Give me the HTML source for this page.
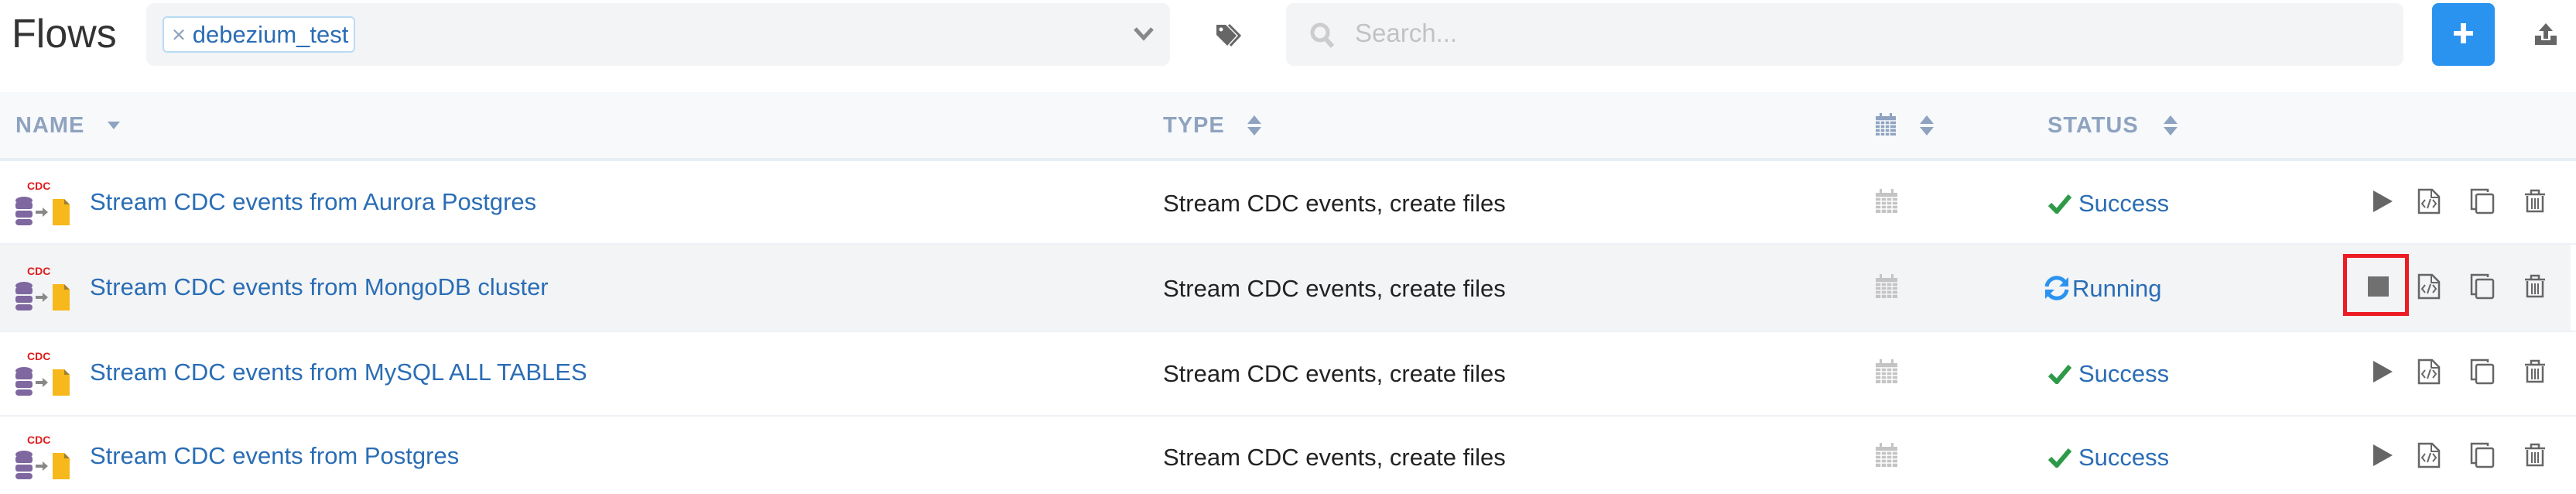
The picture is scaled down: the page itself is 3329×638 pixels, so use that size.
<!DOCTYPE html>
<html><head><meta charset="utf-8"><style>
*{margin:0;padding:0;box-sizing:border-box}
body{width:3329px;height:638px;background:#fff;font-family:"Liberation Sans",sans-serif;position:relative;overflow:hidden}
.a{position:absolute}
.hdr{color:#8fa3c0;font-weight:bold;font-size:29px;letter-spacing:1px}
.name{color:#2a6db5;font-size:31px;left:116px}
.type{color:#222;font-size:31px;left:1503px}
.st{color:#2a6db5;font-size:31px;left:2686px}
</style></head><body>
<div class="a" style="left:15px;top:14px;font-size:52px;color:#333">Flows</div>
<div class="a" style="left:189px;top:4px;width:1323px;height:81px;background:#f3f4f6;border-radius:10px"></div>
<div class="a" style="left:210px;top:21px;width:249px;height:47px;border:2px solid #b9dcf5;border-radius:6px;background:#fff;color:#2a6db5;font-size:31px;line-height:43px;padding-left:10px"><span style="color:#8fa3c0">×</span> debezium_test</div>
<svg class="a" style="left:1464px;top:34px" width="28" height="20" viewBox="0 0 28 20"><path d="M3 3 L14 15 L25 3" stroke="#888" stroke-width="5" fill="none"/></svg>
<svg class="a" style="left:1570px;top:30px" width="36" height="32" viewBox="0 0 36 32"><path d="M2 2h12l14 14-12 13L2 15z" fill="#666"/><circle cx="8" cy="8" r="2.5" fill="#fff"/><path d="M18 2l14 14-12 13" stroke="#666" stroke-width="3" fill="none"/></svg>
<div class="a" style="left:1662px;top:4px;width:1444px;height:81px;background:#f3f4f6;border-radius:10px"></div>
<svg class="a" style="left:1692px;top:28px" width="34" height="36" viewBox="0 0 34 36"><circle cx="14" cy="14" r="10" stroke="#ccc" stroke-width="5" fill="none"/><path d="M21 22l9 10" stroke="#ccc" stroke-width="6"/></svg>
<div class="a" style="left:1751px;top:24px;font-size:33px;color:#c2c2c2">Search...</div>
<div class="a" style="left:3143px;top:4px;width:81px;height:81px;background:#2a93ef;border-radius:8px"></div>
<div class="a" style="left:3171px;top:30px;width:25px;height:6px;background:#fff;margin-top:10px"></div>
<div class="a" style="left:3180px;top:30px;width:7px;height:26px;background:#fff"></div>
<svg class="a" style="left:3274px;top:28px" width="32" height="32" viewBox="0 0 32 32"><path d="M16 2l9 10h-6v10h-6V12H7z" fill="#666"/><path d="M2 18h8v6h12v-6h8v12H2z" fill="#666"/></svg>
<div class="a" style="left:0;top:119px;width:3329px;height:85px;background:#f7f9fb"></div>
<div class="a" style="left:0;top:204px;width:3329px;height:4px;background:#e8eef5"></div>
<div class="a hdr" style="left:20px;top:146px">NAME</div>
<svg class="a" style="left:139px;top:157px" width="16" height="12"><path d="M0 0h16L8 10z" fill="#8fa3c0"/></svg>
<div class="a hdr" style="left:1503px;top:146px">TYPE</div>
<svg class="a" style="left:1612px;top:149px" width="18" height="26"><path d="M0 11h18L9 0zM0 15h18L9 26z" fill="#8fa3c0"/></svg>
<svg class="a" style="left:2423px;top:146px" width="28" height="30"><rect x="1" y="4" width="26" height="25" fill="#8fa3c0"/><g stroke="#f7f9fb" stroke-width="1.5"><path d="M1 10h26M1 15h26M1 20h26M1 25h26M7 10v19M13 10v19M19 10v19"/></g><rect x="6" y="0" width="3" height="7" fill="#8fa3c0"/><rect x="19" y="0" width="3" height="7" fill="#8fa3c0"/></svg>
<svg class="a" style="left:2481px;top:149px" width="18" height="26"><path d="M0 11h18L9 0zM0 15h18L9 26z" fill="#8fa3c0"/></svg>
<div class="a hdr" style="left:2646px;top:146px">STATUS</div>
<svg class="a" style="left:2796px;top:149px" width="18" height="26"><path d="M0 11h18L9 0zM0 15h18L9 26z" fill="#8fa3c0"/></svg>

<div class="a" style="left:0;top:316px;width:3322px;height:111px;background:#f3f4f6"></div>
<div class="a" style="left:0;top:314px;width:3329px;height:2px;background:#eef1f5"></div>
<div class="a" style="left:0;top:427px;width:3329px;height:2px;background:#eef1f5"></div>
<div class="a" style="left:0;top:536px;width:3329px;height:2px;background:#eef1f5"></div>

<!-- rows -->
<div id="rows"></div>
<script></script>

<!-- row template repeated statically -->
<!-- Row 1 center 262 -->
<svg class="a" style="left:18px;top:232px" width="78" height="60" viewBox="0 0 78 60"><text x="17" y="13" font-size="14" font-weight="bold" fill="#e01b1b" font-family="Liberation Sans">CDC</text><g fill="#7f67a0"><ellipse cx="13" cy="27" rx="11" ry="5"/><rect x="2" y="29" width="22" height="9" rx="3"/><rect x="2" y="40" width="22" height="9" rx="3"/><rect x="2" y="51" width="22" height="8" rx="4"/></g><path d="M28 42h10" stroke="#888" stroke-width="4"/><path d="M37 36l7 6-7 6z" fill="#888"/><path d="M50 25h15l7 7v27H50z" fill="#f6b81a"/><path d="M65 25l7 7h-7z" fill="#a08030"/></svg>
<div class="a name" style="top:243px">Stream CDC events from Aurora Postgres</div>
<div class="a type" style="top:245px">Stream CDC events, create files</div>
<svg class="a" style="left:2423px;top:244px" width="30" height="32"><rect x="1" y="5" width="28" height="26" fill="#c4c4c4"/><g stroke="#fff" stroke-width="1.5"><path d="M1 11h28M1 16h28M1 21h28M1 26h28M8 11v20M15 11v20M22 11v20"/></g><rect x="6" y="0" width="3" height="8" fill="#c4c4c4"/><rect x="21" y="0" width="3" height="8" fill="#c4c4c4"/></svg>
<svg class="a" style="left:2647px;top:250px" width="30" height="26"><path d="M2 14l9 9L28 3" stroke="#2e9a48" stroke-width="6" fill="none"/></svg>
<div class="a st" style="top:245px">Success</div>

<div class="a name" style="top:353px">Stream CDC events from MongoDB cluster</div>
<div class="a type" style="top:355px">Stream CDC events, create files</div>
<div class="a name" style="top:463px">Stream CDC events from MySQL ALL TABLES</div>
<div class="a type" style="top:465px">Stream CDC events, create files</div>
<div class="a name" style="top:571px">Stream CDC events from Postgres</div>
<div class="a type" style="top:573px">Stream CDC events, create files</div>

<svg class="a" style="left:18px;top:342px" width="78" height="60" viewBox="0 0 78 60"><text x="17" y="13" font-size="14" font-weight="bold" fill="#e01b1b" font-family="Liberation Sans">CDC</text><g fill="#7f67a0"><ellipse cx="13" cy="27" rx="11" ry="5"/><rect x="2" y="29" width="22" height="9" rx="3"/><rect x="2" y="40" width="22" height="9" rx="3"/><rect x="2" y="51" width="22" height="8" rx="4"/></g><path d="M28 42h10" stroke="#888" stroke-width="4"/><path d="M37 36l7 6-7 6z" fill="#888"/><path d="M50 25h15l7 7v27H50z" fill="#f6b81a"/><path d="M65 25l7 7h-7z" fill="#a08030"/></svg>
<svg class="a" style="left:18px;top:452px" width="78" height="60" viewBox="0 0 78 60"><text x="17" y="13" font-size="14" font-weight="bold" fill="#e01b1b" font-family="Liberation Sans">CDC</text><g fill="#7f67a0"><ellipse cx="13" cy="27" rx="11" ry="5"/><rect x="2" y="29" width="22" height="9" rx="3"/><rect x="2" y="40" width="22" height="9" rx="3"/><rect x="2" y="51" width="22" height="8" rx="4"/></g><path d="M28 42h10" stroke="#888" stroke-width="4"/><path d="M37 36l7 6-7 6z" fill="#888"/><path d="M50 25h15l7 7v27H50z" fill="#f6b81a"/><path d="M65 25l7 7h-7z" fill="#a08030"/></svg>
<svg class="a" style="left:18px;top:560px" width="78" height="60" viewBox="0 0 78 60"><text x="17" y="13" font-size="14" font-weight="bold" fill="#e01b1b" font-family="Liberation Sans">CDC</text><g fill="#7f67a0"><ellipse cx="13" cy="27" rx="11" ry="5"/><rect x="2" y="29" width="22" height="9" rx="3"/><rect x="2" y="40" width="22" height="9" rx="3"/><rect x="2" y="51" width="22" height="8" rx="4"/></g><path d="M28 42h10" stroke="#888" stroke-width="4"/><path d="M37 36l7 6-7 6z" fill="#888"/><path d="M50 25h15l7 7v27H50z" fill="#f6b81a"/><path d="M65 25l7 7h-7z" fill="#a08030"/></svg>

<svg class="a" style="left:2423px;top:354px" width="30" height="32"><rect x="1" y="5" width="28" height="26" fill="#c4c4c4"/><g stroke="#f3f4f6" stroke-width="1.5"><path d="M1 11h28M1 16h28M1 21h28M1 26h28M8 11v20M15 11v20M22 11v20"/></g><rect x="6" y="0" width="3" height="8" fill="#c4c4c4"/><rect x="21" y="0" width="3" height="8" fill="#c4c4c4"/></svg>
<svg class="a" style="left:2423px;top:464px" width="30" height="32"><rect x="1" y="5" width="28" height="26" fill="#c4c4c4"/><g stroke="#fff" stroke-width="1.5"><path d="M1 11h28M1 16h28M1 21h28M1 26h28M8 11v20M15 11v20M22 11v20"/></g><rect x="6" y="0" width="3" height="8" fill="#c4c4c4"/><rect x="21" y="0" width="3" height="8" fill="#c4c4c4"/></svg>
<svg class="a" style="left:2423px;top:572px" width="30" height="32"><rect x="1" y="5" width="28" height="26" fill="#c4c4c4"/><g stroke="#fff" stroke-width="1.5"><path d="M1 11h28M1 16h28M1 21h28M1 26h28M8 11v20M15 11v20M22 11v20"/></g><rect x="6" y="0" width="3" height="8" fill="#c4c4c4"/><rect x="21" y="0" width="3" height="8" fill="#c4c4c4"/></svg>

<svg class="a" style="left:2640px;top:356px" width="36" height="32" viewBox="0 0 36 32"><path d="M5 14A13 13 0 0 1 29 9" stroke="#2a93ef" stroke-width="5" fill="none"/><path d="M33 2v12H21z" fill="#2a93ef"/><path d="M31 18A13 13 0 0 1 7 23" stroke="#2a93ef" stroke-width="5" fill="none"/><path d="M3 30V18h12z" fill="#2a93ef"/></svg>
<div class="a st" style="top:355px;left:2678px">Running</div>
<svg class="a" style="left:2647px;top:470px" width="30" height="26"><path d="M2 14l9 9L28 3" stroke="#2e9a48" stroke-width="6" fill="none"/></svg>
<div class="a st" style="top:465px">Success</div>
<svg class="a" style="left:2647px;top:578px" width="30" height="26"><path d="M2 14l9 9L28 3" stroke="#2e9a48" stroke-width="6" fill="none"/></svg>
<div class="a st" style="top:573px">Success</div>

<!-- actions -->
<svg class="a" style="left:3066px;top:245px" width="28" height="30"><path d="M1 1l25 14L1 29z" fill="#666"/></svg>
<svg class="a" style="left:3066px;top:465px" width="28" height="30"><path d="M1 1l25 14L1 29z" fill="#666"/></svg>
<svg class="a" style="left:3066px;top:573px" width="28" height="30"><path d="M1 1l25 14L1 29z" fill="#666"/></svg>
<div class="a" style="left:3028px;top:328px;width:85px;height:80px;border:5px solid #ed1c24"></div>
<div class="a" style="left:3060px;top:357px;width:27px;height:26px;background:#707070"></div>

<svg class="a" style="left:3124px;top:243px" width="30" height="34" viewBox="0 0 30 34"><path d="M2 2h17l9 9v21H2z" stroke="#666" stroke-width="2.5" fill="none"/><path d="M18 2v10h10" stroke="#666" stroke-width="2" fill="none"/><path d="M10 15l-4 5 4 5M20 15l4 5-4 5M17 14l-4 12" stroke="#666" stroke-width="2" fill="none"/></svg>
<svg class="a" style="left:3124px;top:353px" width="30" height="34" viewBox="0 0 30 34"><path d="M2 2h17l9 9v21H2z" stroke="#666" stroke-width="2.5" fill="none"/><path d="M18 2v10h10" stroke="#666" stroke-width="2" fill="none"/><path d="M10 15l-4 5 4 5M20 15l4 5-4 5M17 14l-4 12" stroke="#666" stroke-width="2" fill="none"/></svg>
<svg class="a" style="left:3124px;top:463px" width="30" height="34" viewBox="0 0 30 34"><path d="M2 2h17l9 9v21H2z" stroke="#666" stroke-width="2.5" fill="none"/><path d="M18 2v10h10" stroke="#666" stroke-width="2" fill="none"/><path d="M10 15l-4 5 4 5M20 15l4 5-4 5M17 14l-4 12" stroke="#666" stroke-width="2" fill="none"/></svg>
<svg class="a" style="left:3124px;top:571px" width="30" height="34" viewBox="0 0 30 34"><path d="M2 2h17l9 9v21H2z" stroke="#666" stroke-width="2.5" fill="none"/><path d="M18 2v10h10" stroke="#666" stroke-width="2" fill="none"/><path d="M10 15l-4 5 4 5M20 15l4 5-4 5M17 14l-4 12" stroke="#666" stroke-width="2" fill="none"/></svg>

<svg class="a" style="left:3191px;top:243px" width="34" height="34" viewBox="0 0 34 34"><path d="M24 5V2H3v25h5" stroke="#666" stroke-width="2.5" fill="none"/><rect x="9" y="8" width="22" height="24" rx="2" stroke="#666" stroke-width="2.5" fill="none"/></svg>
<svg class="a" style="left:3191px;top:353px" width="34" height="34" viewBox="0 0 34 34"><path d="M24 5V2H3v25h5" stroke="#666" stroke-width="2.5" fill="none"/><rect x="9" y="8" width="22" height="24" rx="2" stroke="#666" stroke-width="2.5" fill="none"/></svg>
<svg class="a" style="left:3191px;top:463px" width="34" height="34" viewBox="0 0 34 34"><path d="M24 5V2H3v25h5" stroke="#666" stroke-width="2.5" fill="none"/><rect x="9" y="8" width="22" height="24" rx="2" stroke="#666" stroke-width="2.5" fill="none"/></svg>
<svg class="a" style="left:3191px;top:571px" width="34" height="34" viewBox="0 0 34 34"><path d="M24 5V2H3v25h5" stroke="#666" stroke-width="2.5" fill="none"/><rect x="9" y="8" width="22" height="24" rx="2" stroke="#666" stroke-width="2.5" fill="none"/></svg>

<svg class="a" style="left:3262px;top:244px" width="28" height="32" viewBox="0 0 28 32"><path d="M1 7h26M9 7V2h10v5" stroke="#666" stroke-width="2.5" fill="none"/><path d="M4 9v20h20V9" stroke="#666" stroke-width="2.5" fill="none"/><path d="M10 12v14M14 12v14M18 12v14" stroke="#666" stroke-width="2"/></svg>
<svg class="a" style="left:3262px;top:354px" width="28" height="32" viewBox="0 0 28 32"><path d="M1 7h26M9 7V2h10v5" stroke="#666" stroke-width="2.5" fill="none"/><path d="M4 9v20h20V9" stroke="#666" stroke-width="2.5" fill="none"/><path d="M10 12v14M14 12v14M18 12v14" stroke="#666" stroke-width="2"/></svg>
<svg class="a" style="left:3262px;top:464px" width="28" height="32" viewBox="0 0 28 32"><path d="M1 7h26M9 7V2h10v5" stroke="#666" stroke-width="2.5" fill="none"/><path d="M4 9v20h20V9" stroke="#666" stroke-width="2.5" fill="none"/><path d="M10 12v14M14 12v14M18 12v14" stroke="#666" stroke-width="2"/></svg>
<svg class="a" style="left:3262px;top:572px" width="28" height="32" viewBox="0 0 28 32"><path d="M1 7h26M9 7V2h10v5" stroke="#666" stroke-width="2.5" fill="none"/><path d="M4 9v20h20V9" stroke="#666" stroke-width="2.5" fill="none"/><path d="M10 12v14M14 12v14M18 12v14" stroke="#666" stroke-width="2"/></svg>
</body></html>
